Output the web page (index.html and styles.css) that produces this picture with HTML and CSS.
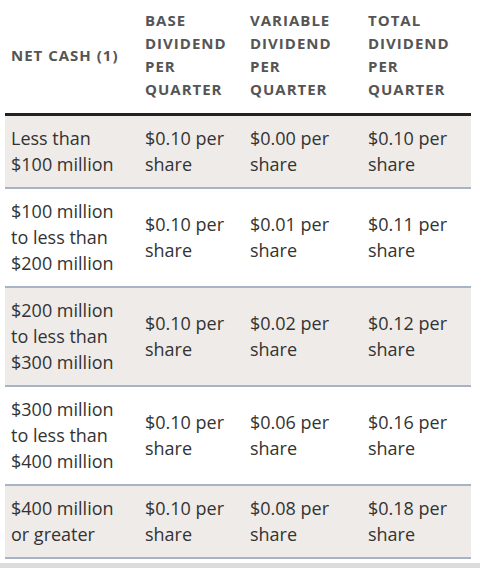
FILE: index.html
```html
<!DOCTYPE html>
<html lang="en">
<head>
    <meta charset="UTF-8">
    <title>Dividend Policy</title>
    <link rel="stylesheet" href="styles.css">
</head>
<body>
    <div class="page">
        <table class="dividend-table">
            <colgroup>
                <col class="col-cash">
                <col class="col-base">
                <col class="col-var">
                <col class="col-total">
            </colgroup>
            <thead>
                <tr>
                    <th>NET CASH (1)</th>
                    <th>BASE DIVIDEND PER QUARTER</th>
                    <th>VARIABLE DIVIDEND PER QUARTER</th>
                    <th>TOTAL DIVIDEND PER QUARTER</th>
                </tr>
            </thead>
            <tbody>
                <tr class="shaded">
                    <td>Less than<br>$100 million</td>
                    <td>$0.10 per share</td>
                    <td>$0.00 per share</td>
                    <td>$0.10 per share</td>
                </tr>
                <tr>
                    <td>$100 million<br>to less than<br>$200 million</td>
                    <td>$0.10 per share</td>
                    <td>$0.01 per share</td>
                    <td>$0.11 per share</td>
                </tr>
                <tr class="shaded">
                    <td>$200 million<br>to less than<br>$300 million</td>
                    <td>$0.10 per share</td>
                    <td>$0.02 per share</td>
                    <td>$0.12 per share</td>
                </tr>
                <tr>
                    <td>$300 million<br>to less than<br>$400 million</td>
                    <td>$0.10 per share</td>
                    <td>$0.06 per share</td>
                    <td>$0.16 per share</td>
                </tr>
                <tr class="shaded">
                    <td>$400 million<br>or greater</td>
                    <td>$0.10 per share</td>
                    <td>$0.08 per share</td>
                    <td>$0.18 per share</td>
                </tr>
            </tbody>
        </table>
        <div class="page-edge"></div>
    </div>
</body>
</html>
```

FILE: styles.css
```css
:root {
    --text-main: #333333;
    --text-head: #555555;
    --row-shade: #efebe8;
    --rule-dark: #222222;
    --rule-light: #a8b3c6;
}

body {
    margin: 0;
    background: #ffffff;
    font-family: 'Open Sans', 'Liberation Sans', sans-serif;
    color: var(--text-main);
}

.page {
    width: 480px;
    height: 568px;
    overflow: hidden;
    display: flex;
    flex-direction: column;
}

.dividend-table {
    margin: 0 9px 0 5px;
    width: 466px;
    border-collapse: collapse;
    table-layout: fixed;
}

.col-cash { width: 134px; }
.col-base { width: 105px; }
.col-var { width: 118px; }
.col-total { width: 109px; }

th {
    padding: 9px 6px 12px 6px;
    font: 700 15px/23px 'Open Sans', sans-serif;
    letter-spacing: 1px;
    color: var(--text-head);
    text-align: left;
    vertical-align: middle;
    border-bottom: 3px solid var(--rule-dark);
}

td {
    padding: 9px 6px 10px 6px;
    font: 400 18px/26px 'Open Sans', sans-serif;
    color: var(--text-main);
    text-align: left;
    vertical-align: middle;
    border-bottom: 2px solid var(--rule-light);
}

.shaded td {
    background: var(--row-shade);
}

.page-edge {
    margin-top: auto;
    height: 5px;
    background: #dcdcdc;
}
```
